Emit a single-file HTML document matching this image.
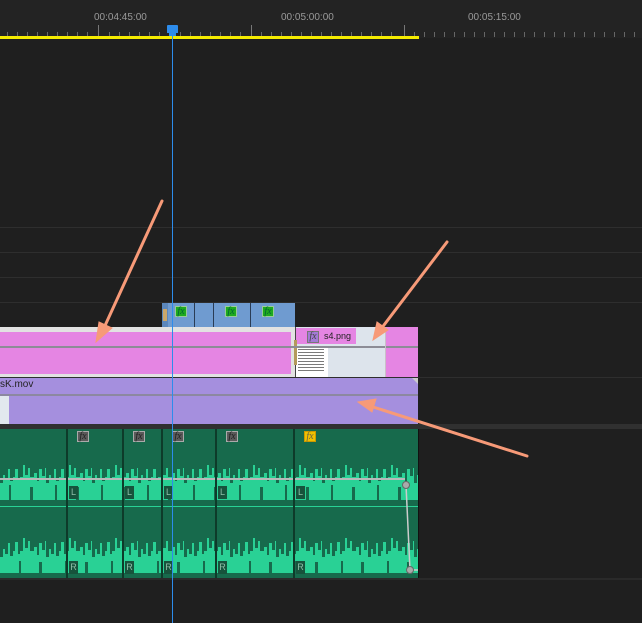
<!DOCTYPE html>
<html><head><meta charset="utf-8"><style>
*{margin:0;padding:0;box-sizing:border-box}
body{width:642px;height:623px;background:#1f1f1f;position:relative;overflow:hidden;font-family:"Liberation Sans",sans-serif}
.a{position:absolute}
.tc{position:absolute;top:12px;font-size:10px;color:#9a9a9a}
.fx{position:absolute;width:12px;height:11px;font-size:10px;font-style:italic;text-align:center;line-height:10px;font-family:"Liberation Serif",serif;overflow:visible}
.g{background:#1eaa1e;border:1px solid #9c9;color:#063}
.ga{background:#5a5a5a;border:1px solid #aaa;color:#222}
.lr{position:absolute;width:9px;height:13px;background:#17533c;color:#8fbfa8;font-size:9px;text-align:center;line-height:13px}
.sep{position:absolute;top:429px;width:2px;height:149px;background:#0e3b2a}
.row{position:absolute;left:0;width:642px;height:1px;background:#2e2e2e}
</style></head><body>
<div class="a" style="left:0;top:0;width:642px;height:38px;background:#232323"></div>
<div class="tc" style="left:94px">00:04:45:00</div>
<div class="tc" style="left:281px">00:05:00:00</div>
<div class="tc" style="left:468px">00:05:15:00</div>
<svg class="a" style="left:0;top:24px" width="642" height="16">
<g stroke="#666" stroke-width="1">
<path d="M7.5 8v5M17.5 8v5M27.5 8v5M37.5 8v5M47.5 8v5M57.5 8v5M67.5 8v5M77.5 8v5M87.5 8v5M109.5 8v5M119.5 8v5M129.5 8v5M139.5 8v5M149.5 8v5M159.5 8v5M180.5 8v5M190.5 8v5M200.5 8v5M210.5 8v5M220.5 8v5M230.5 8v5M240.5 8v5M261.5 8v5M271.5 8v5M281.5 8v5M291.5 8v5M301.5 8v5M311.5 8v5M321.5 8v5M331.5 8v5M341.5 8v5M351.5 8v5M361.5 8v5M371.5 8v5M381.5 8v5M391.5 8v5M414.5 8v5M424.5 8v5M434.5 8v5M444.5 8v5M454.5 8v5M464.5 8v5M474.5 8v5M484.5 8v5M494.5 8v5M504.5 8v5M514.5 8v5M524.5 8v5M534.5 8v5M544.5 8v5M554.5 8v5M564.5 8v5M574.5 8v5M584.5 8v5M594.5 8v5M604.5 8v5M614.5 8v5M624.5 8v5M634.5 8v5"/>
<path d="M98.5 1v12M251.5 1v12M404.5 1v12" stroke="#777"/></g>
<rect x="0" y="12" width="419" height="3" fill="#f5eb00"/>
</svg>
<div class="a" style="left:167px;top:25px;width:11px;height:8px;background:#2d8ceb;border-radius:1px 1px 0 0"></div>
<div class="a" style="left:169px;top:33px;width:7px;height:3px;background:#2d8ceb"></div>
<div class="row" style="top:227px"></div>
<div class="row" style="top:252px"></div>
<div class="row" style="top:277px"></div>
<div class="row" style="top:302px"></div>
<div class="row" style="top:377px"></div>
<div class="a" style="left:162px;top:303px;width:133px;height:24px;background:#6f9bd0"></div>
<div class="a" style="left:162px;top:303px;width:6px;height:24px;background:#5b87bc"></div>
<div class="a" style="left:163px;top:309px;width:4px;height:12px;background:#c9a76b"></div>
<div class="a" style="left:194px;top:303px;width:1px;height:24px;background:#2a3c55"></div>
<div class="a" style="left:213px;top:303px;width:1px;height:24px;background:#2a3c55"></div>
<div class="a" style="left:250px;top:303px;width:1px;height:24px;background:#2a3c55"></div>
<div class="fx g" style="left:175px;top:306px">fx</div>
<div class="fx g" style="left:225px;top:306px">fx</div>
<div class="fx g" style="left:262px;top:306px">fx</div>
<div class="a" style="left:0;top:327px;width:418px;height:50px;background:#e585e3"></div>
<div class="a" style="left:0;top:327px;width:295px;height:50px;background:#e2e2e2"></div>
<div class="a" style="left:0;top:332px;width:291px;height:42px;background:#e585e3"></div>
<div class="a" style="left:295px;top:327px;width:1px;height:50px;background:#444"></div>
<div class="a" style="left:296px;top:327px;width:89px;height:50px;background:#dde4ec"></div>
<div class="a" style="left:296px;top:328px;width:60px;height:16px;background:#e585e3"></div>
<div class="fx" style="left:307px;top:331px;width:12px;height:12px;background:#a47ad6;border:1px solid #777;color:#444">fx</div>
<div class="a" style="left:324px;top:331px;font-size:9px;color:#222">s4.png</div>
<div class="a" style="left:296px;top:347px;width:32px;height:30px;background:#fff"></div>
<div class="a" style="left:298px;top:349px;width:26px;height:22px;background:repeating-linear-gradient(#222 0 1px,#fff 1px 3px);opacity:.6"></div>
<div class="a" style="left:294px;top:340px;width:3px;height:25px;background:#b49a5c"></div>
<div class="a" style="left:0;top:346px;width:418px;height:2px;background:#8c8c96"></div>
<div class="a" style="left:385px;top:327px;width:1px;height:50px;background:#c9c0c8"></div>
<div class="a" style="left:0;top:378px;width:418px;height:46px;background:#a58fde"></div>
<div class="a" style="left:0;top:379px;font-size:10px;color:#222">sK.mov</div>
<div class="a" style="left:0;top:394px;width:418px;height:2px;background:#8c88a0"></div>
<div class="a" style="left:0;top:396px;width:9px;height:28px;background:#e2e8ee"></div>
<div class="a" style="left:412px;top:378px;width:0;height:0;border-left:6px solid transparent;border-top:6px solid #ccc"></div>
<div class="a" style="left:0;top:424px;width:642px;height:5px;background:#303030"></div>
<div class="a" style="left:0;top:429px;width:418px;height:149px;background:#176a4c"></div>
<svg class="a" style="left:0;top:429px" width="418" height="149">
<defs><pattern id="w" width="46" height="149" patternUnits="userSpaceOnUse">
<path fill="#29d195" d="M0 54h3v-8h2v4h3v-10h2v12h3v-4h2v-8h3v11h2v-3h3v-12h2v10h3v-7h2v9h4v-4h3v8h2v-12h3v7h3v-8h3v10h2v-4h2v26H0z"/>
<path fill="#29d195" d="M0 128h3v-8h2v5h3v-11h2v13h3v-5h2v-9h3v12h2v-3h3v-13h2v10h3v-7h2v10h4v-4h3v8h2v-12h3v7h3v-9h3v11h2v-5h2v26H0z"/>
<path fill="#176a4c" d="M9 56h2v18H9zM30 58h3v16h-3zM19 132h2v17h-2zM39 133h3v16h-3z"/>
</pattern></defs>
<rect width="418" height="149" fill="url(#w)"/>
<rect y="77" width="418" height="1" fill="#29d195"/>
<rect y="49" width="405" height="2" fill="#b9b9b9"/>
<path d="M406 56L410 141h8" stroke="#ccc" stroke-width="1.5" fill="none"/>
<circle cx="406" cy="56" r="3.5" fill="#aaa" stroke="#666"/>
<circle cx="410" cy="141" r="3.5" fill="#aaa" stroke="#666"/>
</svg>
<div class="sep" style="left:66px"></div><div class="sep" style="left:122px"></div><div class="sep" style="left:161px"></div><div class="sep" style="left:215px"></div><div class="sep" style="left:293px"></div>
<div class="fx ga" style="left:77px;top:431px">fx</div>
<div class="fx ga" style="left:133px;top:431px">fx</div>
<div class="fx ga" style="left:172px;top:431px">fx</div>
<div class="fx ga" style="left:226px;top:431px">fx</div>
<div class="fx" style="left:304px;top:431px;background:#f0c000;border:1px solid #c90;color:#664">fx</div>
<div class="lr" style="left:69px;top:486px">L</div><div class="lr" style="left:125px;top:486px">L</div><div class="lr" style="left:164px;top:486px">L</div><div class="lr" style="left:218px;top:486px">L</div><div class="lr" style="left:296px;top:486px">L</div>
<div class="lr" style="left:69px;top:561px">R</div><div class="lr" style="left:125px;top:561px">R</div><div class="lr" style="left:164px;top:561px">R</div><div class="lr" style="left:218px;top:561px">R</div><div class="lr" style="left:296px;top:561px">R</div>
<div class="a" style="left:418px;top:429px;width:1px;height:149px;background:#111"></div>
<div class="a" style="left:0;top:578px;width:642px;height:2px;background:#2a2a2a"></div>
<div class="a" style="left:172px;top:33px;width:1px;height:590px;background:#2d8ceb"></div>
<svg class="a" style="left:0;top:0" width="642" height="623">
<g stroke="#f79a78" stroke-width="3" fill="#f79a78" stroke-linecap="round">
<line x1="162" y1="201" x2="103" y2="330"/>
<polygon points="96,342 99,322 112,328" stroke-width="1"/>
<line x1="447" y1="242" x2="381" y2="329"/>
<polygon points="373,340 377,322 388,330" stroke-width="1"/>
<line x1="527" y1="456" x2="370" y2="406"/>
<polygon points="358,402 376,399 372,412" stroke-width="1"/>
</g></svg>
</body></html>
